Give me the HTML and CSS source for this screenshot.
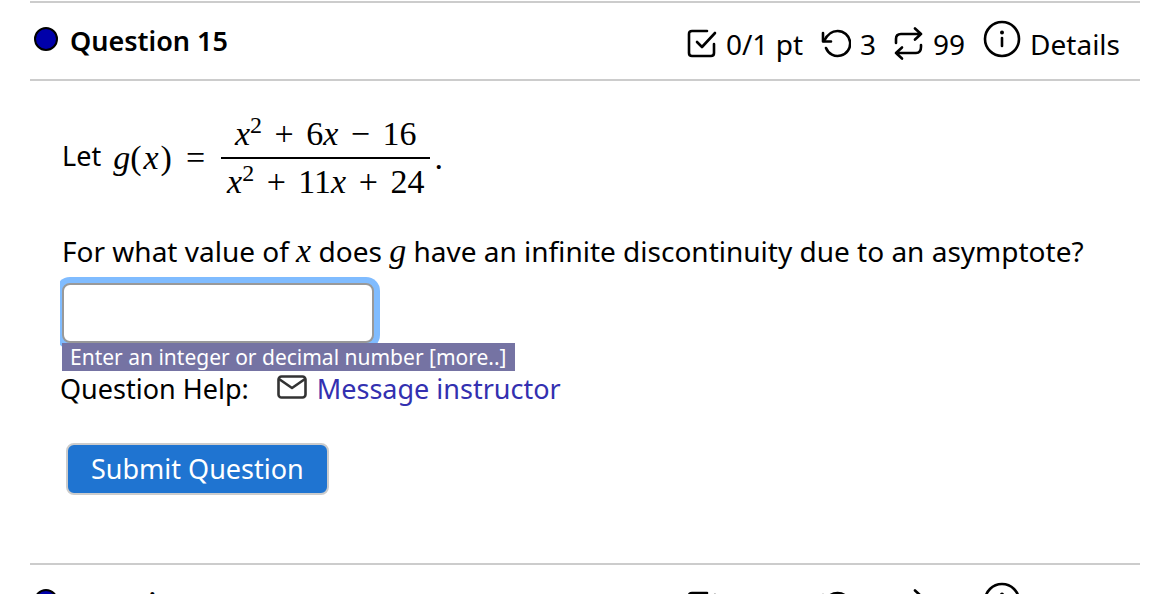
FILE: index.html
```
<!DOCTYPE html>
<html lang="en">
<head>
  <meta charset="UTF-8">
  <meta name="viewport" content="width=device-width, initial-scale=1">
  <title>Question 15</title>
  <link rel="stylesheet" href="styles.css">
</head>
<body>

<!-- shared header icons -->
<svg class="icon-defs" width="0" height="0" aria-hidden="true">
  <symbol id="icon-check" viewBox="0 0 30 30">
    <path d="M20 2H5Q2 2 2 5V24Q2 27 5 27H24Q27 27 27 24V15"/>
    <path d="M10 13L15 18L28 4"/>
  </symbol>
  <symbol id="icon-undo" viewBox="0 0 30 30">
    <path d="M2 4V12.500H10"/>
    <path d="M3 12C6 6 10 2 16.500 2A12.500 12.500 0 1 1 5 19"/>
  </symbol>
  <symbol id="icon-repeat" viewBox="0 0 30 34">
    <path d="M2 16V12Q2 7 7 7H27M21 1.500L27 7L21 12.500"/>
    <path d="M27 18V20Q27 26 22 26H2M8 20.500L2 26L8 31.500"/>
  </symbol>
  <symbol id="icon-info" viewBox="0 0 38 38">
    <circle cx="19" cy="19" r="17"/>
    <path d="M19 18V26"/>
    <circle class="dot" cx="19" cy="12.500" r="2"/>
  </symbol>
</svg>

<main class="questions">

  <section class="question">
    <header class="question-header">
      <span class="status"></span>
      <h2>Question 15</h2>
      <ul class="info">
        <li><svg class="icon"><use href="#icon-check"/></svg>0/1 pt</li>
        <li><svg class="icon"><use href="#icon-undo"/></svg>3</li>
        <li><svg class="icon icon-tall"><use href="#icon-repeat"/></svg>99</li>
        <li><svg class="icon icon-info"><use href="#icon-info"/></svg>Details</li>
      </ul>
    </header>

    <div class="question-body">
      <div class="equation">
        <span class="let">Let</span>
        <span class="math"><i>g</i>(<i class="arg">x</i>)</span>
        <span class="math equals">=</span>
        <span class="math fraction">
          <span class="top"><i>x</i><sup>2</sup> <b>+</b> 6<i>x</i> <b>−</b> 16</span>
          <span class="bottom"><i>x</i><sup>2</sup> <b>+</b> 11<i>x</i> <b>+</b> 24</span>
        </span>
        <span class="math stop">.</span>
      </div>

      <label class="prompt" for="answer">For what value of <i class="math">x</i> does <i class="math">g</i> have an infinite discontinuity due to an asymptote?</label>
      <input class="answer" id="answer" type="text" autocomplete="off" aria-describedby="tip">
      <div class="tip" id="tip">Enter an integer or decimal number [more..]</div>

      <div class="help">
        <span>Question Help:</span>
        <a href="#">
          <svg class="mail" viewBox="0 0 30 24" aria-hidden="true">
            <rect x="1.500" y="1.500" width="27" height="21" rx="3"/>
            <path d="M2 4L15 13L28 4"/>
          </svg>Message instructor</a>
      </div>

      <button class="submit" type="button">Submit Question</button>
    </div>
  </section>

  <section class="question">
    <header class="question-header">
      <span class="status"></span>
      <h2>Question 16</h2>
      <ul class="info">
        <li><svg class="icon"><use href="#icon-check"/></svg>0/1 pt</li>
        <li><svg class="icon"><use href="#icon-undo"/></svg>3</li>
        <li><svg class="icon icon-tall"><use href="#icon-repeat"/></svg>99</li>
        <li><svg class="icon icon-info"><use href="#icon-info"/></svg>Details</li>
      </ul>
    </header>
  </section>

</main>

</body>
</html>
```
FILE: styles.css
```
* {
  box-sizing: border-box;
}
body {
  margin: 0;
  height: 100vh;
  overflow: hidden;
  background: #fff;
  color: #000;
  font-family: "Trebuchet MS", "Noto Sans", sans-serif;
  font-size: 27px;
  line-height: 36px;
}
.icon-defs {
  position: absolute;
}
.questions {
  padding: 1px 30px 0;
}

/* header */
.question-header {
  display: flex;
  align-items: center;
  height: 80px;
  padding: 0 20px 0 4px;
  border-top: 2px solid #ccc;
  border-bottom: 2px solid #ccc;
}
.status {
  width: 24px;
  height: 24px;
  margin: 0 12px 4px 0;
  border: 2px solid #000;
  border-radius: 50%;
  background: #00a;
}
h2 {
  margin: 0;
  font-size: 27px;
  font-weight: 600;
}
.info {
  display: flex;
  gap: 18px;
  margin: 0 0 0 auto;
  padding: 6px 0 0;
  list-style: none;
  font-size: 28px;
}
.info li {
  display: flex;
  align-items: center;
  gap: 9px;
}
.icon {
  width: 30px;
  height: 30px;
  fill: none;
  stroke: #000;
  stroke-width: 2.6;
  stroke-linecap: round;
  stroke-linejoin: round;
}
.icon-tall {
  height: 34px;
}
.icon-info {
  width: 38px;
  height: 38px;
  margin: -6px 0 4px;
}
.dot {
  fill: #000;
  stroke: none;
}

/* question */
.question-body {
  margin: 0 30px;
  padding: 33px 2px 68px;
  overflow: hidden;
}
.math {
  font-family: "Liberation Serif", serif;
  font-size: 34px;
}
.equation {
  display: flex;
  align-items: center;
  gap: 12px;
  height: 88px;
}
.let {
  padding-bottom: 4px;
}
.equation .arg {
  padding: 0 2px;
}
.equals {
  padding: 0 4px 0 2px;
}
.fraction {
  display: flex;
  flex-direction: column;
  text-align: center;
  line-height: 46px;
}
.fraction b {
  margin: 0 4px;
  font-weight: 400;
}
.fraction > span {
  padding: 0 6px;
}
.top {
  border-bottom: 2px solid #000;
}
sup {
  font-size: 24px;
  line-height: 0;
}
.stop {
  margin-left: -8px;
}
.prompt {
  display: block;
  margin-top: 31px;
  font-size: 28px;
}
.answer {
  display: block;
  width: 312px;
  height: 60px;
  margin-top: 14px;
  padding: 4px 12px;
  border: 2px solid #999;
  border-radius: 8px;
  outline: none;
  box-shadow: 0 0 0 6px #80bcff;
  font: inherit;
}
.tip {
  position: relative;
  width: fit-content;
  padding: 0 8px;
  background: #7573a3;
  color: #fff;
  font-size: 21px;
  line-height: 28px;
}
.help {
  display: flex;
  gap: 28px;
  margin-left: -2px;
}
.help a {
  display: flex;
  align-items: center;
  gap: 10px;
  color: #3330b0;
  text-decoration: none;
}
.mail {
  width: 30px;
  height: 24px;
  margin-bottom: 4px;
  fill: none;
  stroke: #333;
  stroke-width: 2.6;
  stroke-linejoin: round;
}
.submit {
  display: block;
  margin: 36px 0 0 4px;
  padding: 6px 23px;
  border: 2px solid #ccc;
  border-radius: 8px;
  background: #1f74d1;
  color: #fff;
  font: inherit;
}
```
